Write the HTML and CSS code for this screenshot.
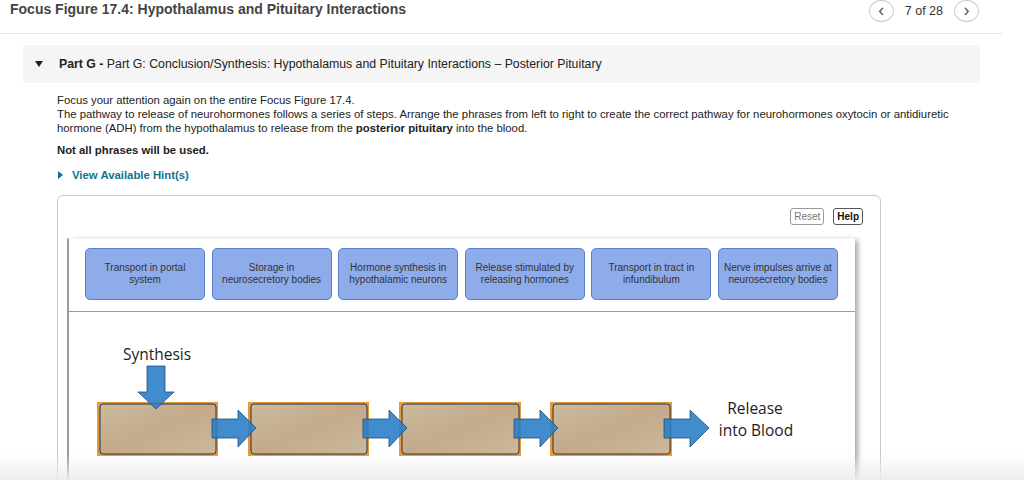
FILE: index.html
```html
<!DOCTYPE html>
<html lang="en">
<head>
    <meta charset="UTF-8">
    <title>Focus Figure 17.4: Hypothalamus and Pituitary Interactions</title>
    <link rel="stylesheet" href="styles.css">
</head>
<body>
    <div class="header">
        <h1>Focus Figure 17.4: Hypothalamus and Pituitary Interactions</h1>
        <div class="pager">
            <span class="circle-btn">&#x2039;</span>
            <span class="count">7 of 28</span>
            <span class="circle-btn">&#x203A;</span>
        </div>
    </div>

    <div class="part-bar">
        <span class="caret"></span>
        <span><b>Part G -</b> Part G: Conclusion/Synthesis: Hypothalamus and Pituitary Interactions &ndash; Posterior Pituitary</span>
    </div>

    <div class="content">
        <p class="intro">Focus your attention again on the entire Focus Figure 17.4.<br>
        The pathway to release of neurohormones follows a series of steps. Arrange the phrases from left to right to create the correct pathway for neurohormones oxytocin or antidiuretic hormone (ADH) from the hypothalamus to release from the <b>posterior pituitary</b> into the blood.</p>
        <p class="note">Not all phrases will be used.</p>
        <div class="hint"><span class="hint-caret"></span>View Available Hint(s)</div>

        <div class="panel">
            <div class="toolbar">
                <button class="btn reset">Reset</button>
                <button class="btn help">Help</button>
            </div>
            <div class="drag-area">
                <div class="tiles">
                    <div class="tile">Transport in portal system</div>
                    <div class="tile">Storage in neurosecretory bodies</div>
                    <div class="tile">Hormone synthesis in hypothalamic neurons</div>
                    <div class="tile">Release stimulated by releasing hormones</div>
                    <div class="tile">Transport in tract in infundibulum</div>
                    <div class="tile">Nerve impulses arrive at neurosecretory bodies</div>
                </div>
                <div class="diagram">
                    <svg width="786" height="180" viewBox="0 0 786 180">
                        <defs>
                            <linearGradient id="tan" x1="0" y1="0" x2="1" y2="1">
                                <stop offset="0" stop-color="#cbbb9d"/>
                                <stop offset="0.5" stop-color="#c4aa8b"/>
                                <stop offset="1" stop-color="#cbb99b"/>
                            </linearGradient>
                        </defs>
                        <text x="88" y="48" class="dg-text" text-anchor="middle">Synthesis</text>

                        <!-- boxes -->
                        <g>
                            <rect x="28" y="90" width="121" height="54" fill="#e49a3a"/>
                            <rect x="31" y="92" width="116" height="50" rx="3" fill="url(#tan)" stroke="#2e2e44" stroke-width="1"/>
                            <rect x="179" y="90" width="121" height="54" fill="#e49a3a"/>
                            <rect x="182" y="92" width="116" height="50" rx="3" fill="url(#tan)" stroke="#2e2e44" stroke-width="1"/>
                            <rect x="330" y="90" width="122" height="54" fill="#e49a3a"/>
                            <rect x="333" y="92" width="117" height="50" rx="3" fill="url(#tan)" stroke="#2e2e44" stroke-width="1"/>
                            <rect x="481" y="90" width="122" height="54" fill="#e49a3a"/>
                            <rect x="484" y="92" width="117" height="50" rx="3" fill="url(#tan)" stroke="#2e2e44" stroke-width="1"/>
                        </g>

                        <!-- arrows -->
                        <g fill="#2c80c6" fill-opacity="0.9" stroke="#1d4f7c" stroke-width="0.8">
                            <path d="M78 54 H96 V80 H105 L87 97 L69 80 H78 Z"/>
                            <path d="M143 107 H169 V98 L187 116 L169 135 V126 H143 Z"/>
                            <path d="M294 107 H320 V98 L338 116 L320 135 V126 H294 Z"/>
                            <path d="M445 107 H471 V98 L489 116 L471 135 V126 H445 Z"/>
                            <path d="M595 107 H621 V98 L640 116 L621 135 V126 H595 Z"/>
                        </g>

                        <text x="686" y="102" class="dg-text" text-anchor="middle">Release</text>
                        <text x="687" y="124" class="dg-text" text-anchor="middle">into Blood</text>
                    </svg>
                </div>
            </div>
        </div>
    </div>

    <div class="bottom-fade"></div>
</body>
</html>
```

FILE: styles.css
```css
body {
    margin: 0;
    font-family: 'Liberation Sans', Arial, sans-serif;
    color: #333;
    background-color: #fff;
}

.header {
    width: 992px;
    height: 33px;
    padding-left: 10px;
    display: flex;
    justify-content: space-between;
    align-items: flex-start;
    border-bottom: 1px solid #e2e2e2;
}

.header h1 {
    margin: 0;
    font-size: 14px;
    line-height: 18px;
    font-weight: bold;
    color: #444;
}

.pager {
    display: flex;
    align-items: center;
    gap: 11px;
    padding-right: 23px;
}

.circle-btn {
    width: 25px;
    height: 22px;
    border: 1px solid #ccc;
    border-radius: 50%;
    display: flex;
    align-items: center;
    justify-content: center;
    font-size: 18px;
    color: #555;
    line-height: 1;
    padding-bottom: 2px;
    box-sizing: border-box;
}

.count {
    font-size: 12.5px;
    color: #333;
}

.part-bar {
    margin: 11px 44px 0 23px;
    height: 38px;
    background-color: #f5f5f5;
    display: flex;
    align-items: center;
    font-size: 12.3px;
    color: #222;
}

.caret {
    width: 0;
    height: 0;
    margin: 0 16px 0 12px;
    border-left: 4px solid transparent;
    border-right: 4px solid transparent;
    border-top: 6px solid #222;
}

.content {
    padding-left: 57px;
}

.intro {
    margin: 10px 0 0;
    font-size: 11.35px;
    line-height: 14px;
    width: 912px;
    color: #222;
}

.note {
    margin: 9px 0 0;
    font-size: 11.35px;
    font-weight: bold;
    color: #222;
}

.hint {
    margin-top: 13px;
    display: flex;
    align-items: center;
    font-size: 11.35px;
    font-weight: bold;
    color: #0e7391;
}

.hint-caret {
    width: 0;
    height: 0;
    margin: 0 9px 0 1px;
    border-top: 4px solid transparent;
    border-bottom: 4px solid transparent;
    border-left: 5px solid #0e7391;
}

.panel {
    margin-top: 14px;
    width: 822px;
    height: 300px;
    border: 1px solid #c9c9c9;
    border-radius: 6px;
}

.toolbar {
    display: flex;
    justify-content: flex-end;
    gap: 9px;
    padding: 12px 17px 0 0;
    height: 30px;
}

.btn {
    height: 17px;
    padding: 0 3px;
    font-family: 'Liberation Sans', Arial, sans-serif;
    font-size: 10px;
    background-color: #fff;
    border: 1px solid #777;
    border-radius: 3px;
}

.reset {
    color: #777;
    border-color: #999;
}

.help {
    color: #111;
    font-weight: bold;
    border-color: #555;
}

.drag-area {
    margin: 0 0 0 9px;
    width: 786px;
    border-left: 2px solid #9a9a9a;
    border-top: 1px solid #f2f2f2;
    box-shadow: 5px 0 5px -2px rgba(0,0,0,0.35);
}

.tiles {
    display: flex;
    gap: 6.6px;
    padding: 9px 0 11px 16px;
    border-bottom: 1px solid #9a9a9a;
}

.tile {
    width: 120px;
    height: 52px;
    box-sizing: border-box;
    padding: 0 4px;
    display: flex;
    align-items: center;
    justify-content: center;
    text-align: center;
    font-size: 10px;
    line-height: 12px;
    color: #333;
    background-color: #8eabea;
    border: 1px solid #5a7fcc;
    border-radius: 5px;
}

.diagram svg {
    display: block;
}

.dg-text {
    font-family: 'Open Sans', 'Liberation Sans', sans-serif;
    font-size: 15.5px;
    fill: #222;
}

.bottom-fade {
    position: fixed;
    left: 0;
    right: 0;
    bottom: 0;
    height: 26px;
    background: linear-gradient(rgba(236,236,236,0), rgba(236,236,236,0.95));
}
```
